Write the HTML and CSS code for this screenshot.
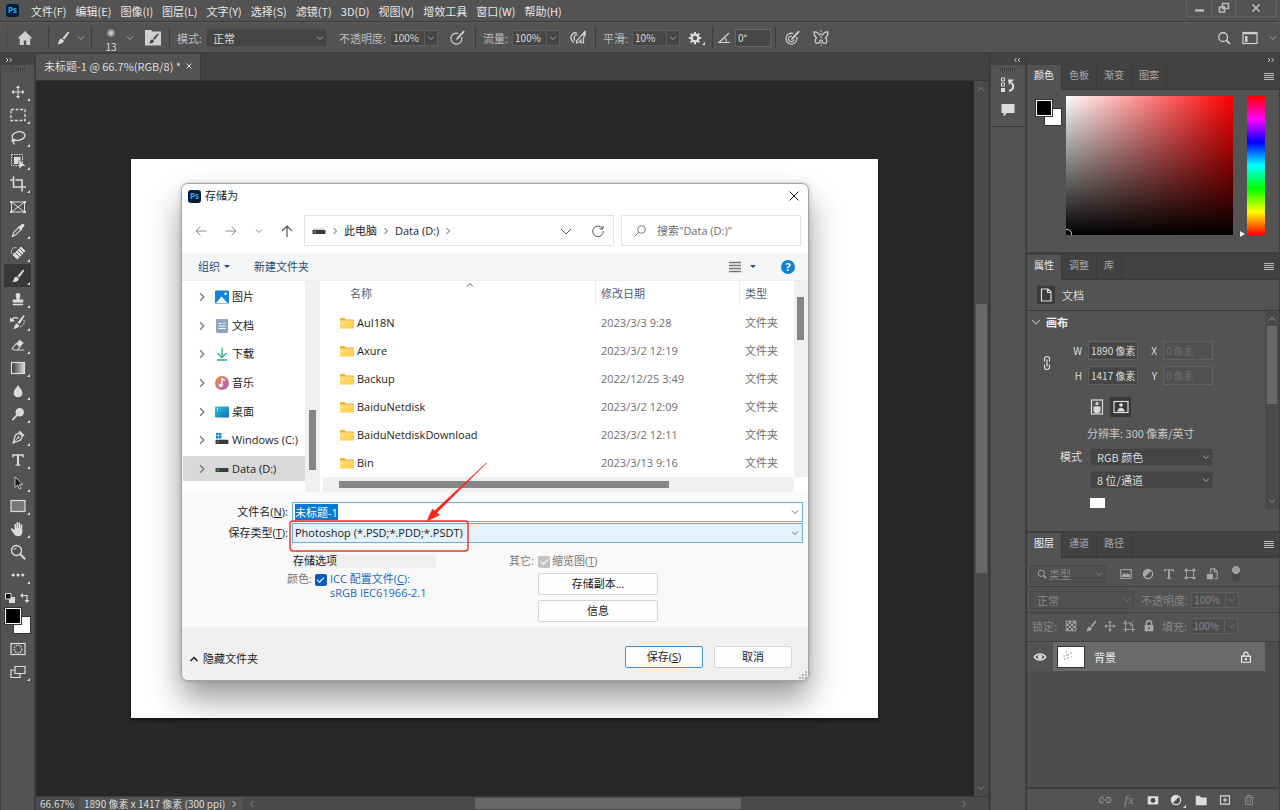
FILE: index.html
```html
<!DOCTYPE html>
<html lang="zh-CN">
  <head>
    <meta charset="UTF-8" />
    <meta name="viewport" content="width=device-width, initial-scale=1.0" />
    <title>未标题-1 @ 66.7%(RGB/8)</title>
    <link rel="stylesheet" href="styles.css">
  </head>
  <body>
    <svg class="sprite" aria-hidden="true">
      <symbol id="down" viewBox="0 0 8 8"><path d="M1 2.5l3 3 3-3" fill="none" stroke="currentColor" /></symbol>
      <symbol id="up" viewBox="0 0 8 8"><path d="M1 5.5l3-3 3 3" fill="none" stroke="currentColor" /></symbol>
      <symbol id="right" viewBox="0 0 8 8"><path d="M2.5 1l3 3-3 3" fill="none" stroke="currentColor" /></symbol>
      <symbol id="left" viewBox="0 0 8 8"><path d="M5.5 1l-3 3 3 3" fill="none" stroke="currentColor" /></symbol>
      <symbol id="expand" viewBox="0 0 8 8"><path d="M1 2l2 2-2 2M4.5 2l2 2-2 2" fill="none" stroke="currentColor" /></symbol>
      <symbol id="collapse" viewBox="0 0 8 8"><path d="M3.5 2l-2 2 2 2M7 2L5 4l2 2" fill="none" stroke="currentColor" /></symbol>
      <symbol id="corner" viewBox="0 0 3 3"><path d="M3 0v3h-3z" fill="currentColor" /></symbol>
      <symbol id="lines" viewBox="0 0 10 8"><path d="M0 .5h10M0 2.5h10M0 4.5h10M0 6.5h10" stroke="currentColor" /></symbol>
      <symbol id="close" viewBox="0 0 12 12"><path d="M1.5 1.5l9 9M10.5 1.5l-9 9" stroke="currentColor" /></symbol>
      <symbol id="home" viewBox="0 0 16 16"><path d="M8 1L.5 8.5h2.3V15h4v-4.5h2.4V15h4V8.5h2.3z" fill="currentColor" /></symbol>
      <symbol id="brush" viewBox="0 0 16 16"><path d="M14.5.8c.8.5.6 1.2.2 1.8L9.5 9.8 7.3 8.2l5.7-6.7c.4-.5 1-.9 1.5-.7zM6.6 9l2.2 1.7c.4 2.6-2 4.4-7.6 4.4 2.1-1.1 1.5-2.3 2.3-4.2.6-1.4 1.8-2 3.1-1.9z" fill="currentColor" /></symbol>
      <symbol id="preset" viewBox="0 0 16 16"><path d="M0 0h6l1.500 1.500H16v14H0z" fill="currentColor" /><path d="M13.200 3.500c.8.5.2 1.300 0 1.600L9.500 10 8 8.800l4-4.700c.4-.5.8-.8 1.200-.6zM7.400 9.500l1.500 1.200c.2 1.800-1.600 2.800-5 2.800 1.300-.7.8-1.500 1.400-2.800.4-.9 1.200-1.300 2.100-1.200z" fill="#444" /></symbol>
      <symbol id="pen-circle" viewBox="0 0 16 16"><path d="M9.500 3.500A5.500 5.500 0 1 0 12.700 7" fill="none" stroke="currentColor" stroke-width="1.200" /><path d="M14.500.5l1.300 1.300-6.600 7.200-2.500 1.200 1.100-2.500z" fill="currentColor" /></symbol>
      <symbol id="target" viewBox="0 0 16 16"><path d="M9.500 3.500A5.500 5.500 0 1 0 12.700 7M8 6.200A2.800 2.800 0 1 0 10 9.500" fill="none" stroke="currentColor" stroke-width="1.200" /><path d="M14.500.5l1.300 1.300-6.600 7.200-2.500 1.200 1.100-2.500z" fill="currentColor" /></symbol>
      <symbol id="airbrush" viewBox="0 0 16 16"><path d="M7 3C3.500 2 1 4.500 1 7.500c0 2.300 1 4 3 5M7.500 5C5.500 4.500 4 6 4 8c0 1 .3 1.800 1 2.500" fill="none" stroke="currentColor" stroke-width="1.300" /><path d="M15 1.500L6.500 11v2l2-.5L11 10v3h2.500V8L15 5z" fill="none" stroke="currentColor" stroke-width="1.200" /><path d="M15.500 1v4L12 6z" fill="currentColor" /></symbol>
      <symbol id="gear" viewBox="0 0 16 16"><circle cx="8" cy="8" r="3.800" fill="none" stroke="currentColor" stroke-width="2.600" /><path d="M8 1v2.5M8 12.500V15M1 8h2.5M12.500 8H15M3 3l1.800 1.800M11.200 11.200L13 13M13 3l-1.800 1.800M4.800 11.200L3 13" stroke="currentColor" stroke-width="2.200" /></symbol>
      <symbol id="angle" viewBox="0 0 16 16"><path d="M13 3L3 12.500h11M8.500 7.500c1.500 1.200 2.200 3 2 5" fill="none" stroke="currentColor" stroke-width="1.200" /></symbol>
      <symbol id="butterfly" viewBox="0 0 16 16"><path d="M7 5.500C5.500 3 3 1.500 1 2c0 2.500.5 4.500 2.500 6C1.500 9.500 2 12 3.500 13.500 5.500 13.500 7 12 7 10M9 5.500C10.500 3 13 1.500 15 2c0 2.500-.5 4.500-2.500 6 2 1.500 1.500 4 0 5.500C10.500 13.500 9 12 9 10" fill="none" stroke="currentColor" stroke-width="1.200" /><path d="M8 0v16" stroke="currentColor" stroke-dasharray="2 1" /></symbol>
      <symbol id="search" viewBox="0 0 16 16"><circle cx="7" cy="7" r="5" fill="none" stroke="currentColor" stroke-width="1.500" /><path d="M10.800 10.800l4 4" stroke="currentColor" stroke-width="2" /></symbol>
      <symbol id="layout" viewBox="0 0 16 16"><rect x="1" y="2.500" width="14" height="11" fill="none" stroke="currentColor" stroke-width="1.200" /><path d="M1 3.500h14" stroke="currentColor" stroke-width="1.600" /><path d="M3 6h2.500v6H3z" fill="currentColor" /></symbol>
      <symbol id="move" viewBox="0 0 16 16"><path d="M8 2v12M2 8h12" stroke="currentColor" stroke-width="1.200" /><path d="M8 .5l2.500 3h-5zM8 15.500l2.500-3h-5zM.5 8l3-2.500v5zM15.500 8l-3-2.500v5z" fill="currentColor" /></symbol>
      <symbol id="marquee" viewBox="0 0 16 16"><rect x="1" y="2.500" width="14" height="11" fill="none" stroke="currentColor" stroke-width="1.300" stroke-dasharray="3 1.600" /></symbol>
      <symbol id="lasso" viewBox="0 0 16 16"><ellipse cx="8.500" cy="6" rx="6.500" ry="4.300" transform="rotate(-12 8.500 6)" fill="none" stroke="currentColor" stroke-width="1.300" /><path d="M3 9c-2 1.500-.5 3.500 1 2.600C5.500 10.600 3.500 9 2.700 10.500c-.5 1.500.8 2.500 2 4" fill="none" stroke="currentColor" stroke-width="1.200" /></symbol>
      <symbol id="object-select" viewBox="0 0 16 16"><rect x="1.500" y="1.500" width="11" height="11" fill="none" stroke="currentColor" stroke-dasharray="1.500 1" /><path d="M4 4h6.500v4L8.500 7v4H4z" fill="currentColor" /><path d="M9 7l6.500 6h-3.300L9.500 15.800z" fill="currentColor" /></symbol>
      <symbol id="crop" viewBox="0 0 16 16"><path d="M3.500.5v10.500H12M0 4h3M5.500 4H12v11.500M13 11h3" fill="none" stroke="currentColor" stroke-width="1.600" /></symbol>
      <symbol id="frame" viewBox="0 0 16 16"><path d="M1.500 3h13v10h-13zM1.500 3l13 10M14.500 3l-13 10" fill="none" stroke="currentColor" /><path d="M0 2h2.500v2H0zM13.500 2H16v2h-2.500zM0 12h2.500v2H0zM13.500 12H16v2h-2.500z" fill="currentColor" /></symbol>
      <symbol id="eyedropper" viewBox="0 0 16 16"><path d="M9 5l2.500 2.500-6.500 6.300-3.500 1.500L3 11z" fill="none" stroke="currentColor" stroke-width="1.300" /><path d="M7.500 4.500l1.300-1.200 1 .9C11 2 12.500.5 14 .8c1.500.5 1.700 2.200.8 3.200-.7.900-1.800 1.800-2.600 2.400l.8.900-1.300 1.300z" fill="currentColor" /></symbol>
      <symbol id="heal" viewBox="0 0 16 16"><path d="M11 2l4 4-7.500 8-4.500-4z" fill="currentColor" stroke="currentColor" stroke-linejoin="round" /><path d="M7.500 5.500l4.500 4.500M5.500 7.500l4.500 4.500M9.500 3.500L14 8" stroke="#535353" stroke-width=".9" /><path d="M2 9C0 5 3 2 7 2.500" fill="none" stroke="currentColor" stroke-dasharray="1.500 1" /></symbol>
      <symbol id="stamp" viewBox="0 0 16 16"><path d="M8 1c2 0 3 1.400 2.700 3.200L9.500 8.500H14V12H2V8.500h4.500L5.300 4.200C5 2.400 6 1 8 1zM2 13.300h12V15H2z" fill="currentColor" /></symbol>
      <symbol id="history" viewBox="0 0 16 16"><path d="M14 1.200c.8.300.7 1 .3 1.600L9.500 10 7.500 8.500 13 1.700c.3-.4.700-.6 1-.5zM7 9.500l2 1.500c.3 2-1.600 3.800-6 3.800 2-1.500 1.500-5 4-5.300z" fill="currentColor" /><path d="M2 6C3 3.500 6 3 8 4.500" fill="none" stroke="currentColor" stroke-width="1.300" /><path d="M0 3.500V8l5-1z" fill="currentColor" /><path d="M14 6c1 3-1 6-4 7" fill="none" stroke="currentColor" stroke-dasharray="1.500 1" /></symbol>
      <symbol id="eraser" viewBox="0 0 16 16"><path d="M10 2l4.500 3.500-4 4.500L6 6.300z" fill="currentColor" /><path d="M10.500 10L7 13.800H3.300L1.200 12 6 6.300zM7 13.800h8" fill="none" stroke="currentColor" stroke-width="1.200" /></symbol>
      <linearGradient id="grad"><stop stop-color="#333" /><stop offset="1" stop-color="#ddd" /></linearGradient>
      <symbol id="gradient" viewBox="0 0 16 16"><rect x="1.500" y="2.500" width="13" height="11" fill="url(#grad)" stroke="currentColor" stroke-width="1.200" /></symbol>
      <symbol id="blur" viewBox="0 0 16 16"><path d="M8 1c2 3.500 5 6 5 9.200A5 5 0 0 1 3 10.200C3 7 6 4.500 8 1z" fill="currentColor" /></symbol>
      <symbol id="dodge" viewBox="0 0 16 16"><circle cx="10" cy="6" r="4.800" fill="currentColor" /><path d="M7 9l-5.500 6" stroke="currentColor" stroke-width="1.800" /></symbol>
      <symbol id="pen" viewBox="0 0 16 16"><path d="M9 3.500L13 7l-2 4.500-8.500 3.300L5 6z" fill="none" stroke="currentColor" stroke-width="1.400" /><path d="M10 .8L15.500 6 14 7.300 8.700 2z" fill="currentColor" /><path d="M2.500 14.500L8 9" stroke="currentColor" /><circle cx="8.500" cy="8.500" r="1.300" fill="currentColor" /></symbol>
      <symbol id="type" viewBox="0 0 16 16"><path d="M1.500 1.500h13V5h-1.200c-.2-1.500-.8-2-2-2H9.200v9.500c0 .8.500 1 1.800 1v1H5v-1c1.300 0 1.800-.2 1.800-1V3H4.700c-1.200 0-1.800.5-2 2H1.500z" fill="currentColor" /></symbol>
      <symbol id="arrow" viewBox="0 0 16 16"><path d="M4.500 1v12l3-2.800 2 4.800 2-1-2-4.500h4z" fill="#111" stroke="currentColor" /></symbol>
      <symbol id="rect" viewBox="0 0 16 16"><rect x="1" y="2.500" width="14" height="11" fill="#777" stroke="currentColor" stroke-width="1.200" /></symbol>
      <symbol id="hand" viewBox="0 0 16 16"><path d="M4.500 9V3.500c0-1 1.600-1 1.600 0V7h.4V1.800c0-1.100 1.700-1.100 1.700 0V7h.4V2.300c0-1.100 1.700-1.100 1.700 0V7.500h.4V4c0-1 1.600-1 1.600 0v7c0 2.700-1.800 4.300-4 4.300-2.500 0-3.700-1-4.800-3L1 8.500c-.5-1 .8-1.600 1.500-.8z" fill="currentColor" /></symbol>
      <symbol id="zoom" viewBox="0 0 16 16"><circle cx="6.500" cy="6.500" r="5" fill="none" stroke="currentColor" stroke-width="1.300" /><path d="M10.200 10.200l5 5" stroke="currentColor" stroke-width="2" /><path d="M4 6a3 3 0 0 1 2.500-2" fill="none" stroke="currentColor" /></symbol>
      <symbol id="more" viewBox="0 0 16 16"><g fill="currentColor"><circle cx="2.500" cy="8" r="1.800" /><circle cx="8" cy="8" r="1.800" /><circle cx="13.500" cy="8" r="1.800" /></g></symbol>
      <symbol id="mask" viewBox="0 0 16 16"><rect x="1" y="2.500" width="14" height="11" fill="none" stroke="currentColor" stroke-width="1.200" /><circle cx="8" cy="8" r="3.800" fill="none" stroke="currentColor" stroke-width="1.200" stroke-dasharray="1.500 1" /></symbol>
      <symbol id="screen" viewBox="0 0 16 16"><path d="M5 2.500h10v7H5zM5 6H1v7.500h9V10" fill="none" stroke="currentColor" stroke-width="1.200" /></symbol>
      <symbol id="default-colors" viewBox="0 0 10 10"><path d="M4 4h6v6H4z" fill="#ddd" /><path d="M.5.5H6V6H.5z" fill="#111" stroke="#ddd" /></symbol>
      <symbol id="swap" viewBox="0 0 10 10"><path d="M2 2.500h5v5.500" fill="none" stroke="currentColor" stroke-width="1.200" /><path d="M0 2.500L3 0v5zM7 10L4.500 7h5z" fill="currentColor" /></symbol>
      <symbol id="hist-panel" viewBox="0 0 16 16"><path d="M1.500 1h3v3h-3zM1.500 6h3v3h-3z" fill="none" stroke="currentColor" /><path d="M1 11h4v4H1z" fill="currentColor" /><path d="M9 14c4.500-1 5.500-5 2.500-8" fill="none" stroke="currentColor" stroke-width="2" /><path d="M8 2.500h6L9 8z" fill="currentColor" /></symbol>
      <symbol id="comment" viewBox="0 0 16 16"><path d="M1.500 2h13v9H7l-3.500 3.500V11h-2z" fill="currentColor" /></symbol>
      <symbol id="page" viewBox="0 0 16 16"><path d="M3.500 2h6.500l3 3v9h-9.500zM9.500 2v3.500H13" fill="none" stroke="currentColor" stroke-width="1.200" /></symbol>
      <symbol id="chain" viewBox="0 0 16 16"><path d="M5.500 6.500V4a2.500 2.500 0 0 1 5 0v2.500M5.500 9.500V12a2.500 2.500 0 0 0 5 0V9.500M8 4.500v7" fill="none" stroke="currentColor" stroke-width="1.200" /></symbol>
      <symbol id="chain-h" viewBox="0 0 16 16"><path d="M6.500 5H4.500a3 3 0 0 0 0 6h2M9.500 5h2a3 3 0 0 1 0 6h-2M4.500 8h7" fill="none" stroke="currentColor" stroke-width="1.300" /></symbol>
      <symbol id="portrait" viewBox="0 0 16 16"><rect x="2.500" y="1" width="11" height="14" fill="none" stroke="currentColor" stroke-width="1.200" /><circle cx="8" cy="4.500" r="1.600" fill="currentColor" /><path d="M4.500 8c0-1 7-1 7 0v4.500h-1V14h-5v-1.500h-1z" fill="currentColor" /></symbol>
      <symbol id="landscape" viewBox="0 0 16 16"><rect x="1" y="2.500" width="14" height="11" fill="none" stroke="currentColor" stroke-width="1.200" /><circle cx="8" cy="6" r="1.800" fill="currentColor" /><path d="M4.500 12.500c0-5 7-5 7 0z" fill="currentColor" /></symbol>
      <symbol id="image" viewBox="0 0 16 16"><rect x="2" y="3" width="12" height="10" fill="none" stroke="currentColor" stroke-width="1.200" /><path d="M3.500 11.500V9L6 6.500l2 2 2-1.500 2.500 2v2.500z" fill="currentColor" /></symbol>
      <symbol id="adjust" viewBox="0 0 16 16"><circle cx="8" cy="8" r="5.300" fill="none" stroke="currentColor" stroke-width="1.400" /><path d="M11.500 4.200a5.200 5.200 0 0 0-7.400 7.400z" fill="currentColor" /></symbol>
      <symbol id="shape" viewBox="0 0 16 16"><rect x="4" y="4" width="8" height="8" fill="none" stroke="currentColor" /><path d="M2 2h3v3H2zM11 2h3v3h-3zM2 11h3v3H2zM11 11h3v3h-3z" fill="currentColor" /></symbol>
      <symbol id="smart" viewBox="0 0 16 16"><path d="M6.500 7V2H11l3 3v8.500h-3.500M10.500 2v3.500H14" fill="none" stroke="currentColor" stroke-width="1.200" /><path d="M2 8h7v6H2z" fill="currentColor" /></symbol>
      <symbol id="checker" viewBox="0 0 16 16"><rect x="2.500" y="2.500" width="11" height="11" fill="none" stroke="currentColor" /><path d="M5.500 2.500h2.500V5H5.500zM10.500 2.500H13V5h-2.500zM3 5h2.500v3H3zM8 5h2.500v3H8zM5.500 8H8v2.500H5.500zM10.500 8H13v2.500h-2.500zM3 10.500h2.500V13H3zM8 10.500h2.500V13H8z" fill="currentColor" /></symbol>
      <symbol id="artboard" viewBox="0 0 16 16"><path d="M3.500 0v16M0 4h10.500L13 6.500V16M0 12.500h16M10 4v3h3M13 1v2" fill="none" stroke="currentColor" stroke-width="1.200" /></symbol>
      <symbol id="lock" viewBox="0 0 16 16"><path d="M5 7V5a3 3 0 0 1 6 0v2" fill="none" stroke="currentColor" stroke-width="1.600" /><path d="M3 7h10v7H3z" fill="currentColor" /><circle cx="8" cy="10.500" r="1" fill="#444" /></symbol>
      <symbol id="lock-line" viewBox="0 0 16 16"><path d="M5.500 7V5a2.500 2.500 0 0 1 5 0v2M3 7h10v7H3z" fill="none" stroke="currentColor" stroke-width="1.300" /><circle cx="8" cy="10.500" r="1.300" fill="currentColor" /></symbol>
      <symbol id="eye" viewBox="0 0 16 16"><path d="M1.500 8C4.500 3.500 11.500 3.500 14.500 8 11.500 12.500 4.500 12.500 1.500 8z" fill="none" stroke="currentColor" stroke-width="1.700" /><circle cx="8" cy="8" r="2.500" fill="currentColor" /></symbol>
      <symbol id="add-mask" viewBox="0 0 16 16"><path d="M1 3h14v11H1z" fill="currentColor" /><circle cx="8" cy="8.500" r="3.200" fill="#444" /></symbol>
      <symbol id="group" viewBox="0 0 16 16"><path d="M2 3h4.500l1.500 2h6.500v9H2z" fill="currentColor" /></symbol>
      <symbol id="new-layer" viewBox="0 0 16 16"><path d="M2 2.500h12v11H2zM8 5v6M5 8h6" fill="none" stroke="currentColor" stroke-width="1.400" /></symbol>
      <symbol id="trash" viewBox="0 0 16 16"><path d="M2 4.500h12M6 4V2h4v2M3.500 4.500V14h9V4.500M6.500 6.500v6M9.500 6.500v6" fill="none" stroke="currentColor" stroke-width="1.300" /></symbol>
      <symbol id="back" viewBox="0 0 12 12"><path d="M11.500 6H1M5.500 1.500L1 6l4.500 4.500" fill="none" stroke="currentColor" /></symbol>
      <symbol id="forward" viewBox="0 0 12 12"><path d="M.5 6H11M6.500 1.500L11 6l-4.500 4.500" fill="none" stroke="currentColor" /></symbol>
      <symbol id="parent" viewBox="0 0 12 12"><path d="M6 12V1M1 6l5-5 5 5" fill="none" stroke="currentColor" stroke-width="1.200" /></symbol>
      <symbol id="refresh" viewBox="0 0 12 12"><path d="M10.500 3.500A5.300 5.300 0 1 0 11.300 6M11 .5V4H7.500" fill="none" stroke="currentColor" /></symbol>
      <symbol id="find" viewBox="0 0 12 12"><circle cx="7.500" cy="4.500" r="3.800" fill="none" stroke="currentColor" /><path d="M4.800 7.200L.5 11.500" stroke="currentColor" /></symbol>
      <symbol id="drive" viewBox="0 0 14 14"><path d="M2 4h10l1.500 3H.5z" fill="#d8dadd" /><rect x=".5" y="6" width="13" height="4" rx=".8" fill="#3a3a3a" /><path d="M2 8h2" stroke="#2bd52b" stroke-width="1.300" /></symbol>
      <symbol id="drive-c" viewBox="0 0 14 14"><path d="M1 6h11l1.500 2H.5z" fill="#c8cacd" /><rect x=".5" y="7" width="13" height="4" rx=".8" fill="#3a3a3a" /><path d="M1 0h2.500v2.500H1zM4 0h2.500v2.500H4zM1 3h2.500v2.500H1zM4 3h2.500v2.500H4z" fill="#0a84dc" /><path d="M2 9h2" stroke="#2bd52b" /></symbol>
      <symbol id="pictures" viewBox="0 0 14 14"><rect width="14" height="13" y=".5" rx="1" fill="#1583d8" /><path d="M1 13l5.500-6.500L12.500 13z" fill="#fff" /><circle cx="10.500" cy="3.800" r="1.200" fill="#fff" /></symbol>
      <symbol id="documents" viewBox="0 0 14 14"><rect x="1" width="12" height="14" rx="1" fill="#8ea4c2" /><path d="M3.500 4.500h3M3.500 7h7M3.500 9.500h7M8 4h2.500" stroke="#fff" stroke-width="1.200" /></symbol>
      <symbol id="downloads" viewBox="0 0 14 14"><path d="M7 .5v9.500M2.500 6L7 10.500 11.500 6M2 13h10" fill="none" stroke="#1fb08c" stroke-width="1.300" /></symbol>
      <linearGradient id="sunset" x2="1" y2="1"><stop stop-color="#f0893f" /><stop offset="1" stop-color="#a95fc4" /></linearGradient>
      <symbol id="music" viewBox="0 0 14 14"><circle cx="7" cy="7" r="7" fill="url(#sunset)" /><circle cx="5.700" cy="9.300" r="1.900" fill="#fff" /><path d="M7 9.500V2.800l3 1.500" fill="none" stroke="#fff" stroke-width="1.300" /></symbol>
      <linearGradient id="sea" x2="1" y2="1"><stop stop-color="#35c3dc" /><stop offset="1" stop-color="#0a6ebd" /></linearGradient>
      <symbol id="desktop" viewBox="0 0 14 14"><rect y="1.500" width="14" height="11" rx="1" fill="url(#sea)" /><path d="M2 3.500h1M2 5.500h1" stroke="#fff" /></symbol>
      <linearGradient id="yellow" x2="1" y2="1"><stop stop-color="#ffe28a" /><stop offset="1" stop-color="#fdc83c" /></linearGradient>
      <symbol id="folder" viewBox="0 0 14 12"><path d="M0 2a1 1 0 0 1 1-1h3.500l1.500 1.500h7a1 1 0 0 1 1 1V6H0z" fill="#efb02f" /><path d="M0 3.500h13a1 1 0 0 1 1 1v7H0z" fill="url(#yellow)" /></symbol>
    </svg>

    <div class="app">
      <header class="menubar">
        <span class="logo">Ps</span>
        <nav class="menus">
          <a href="#">文件(F)</a>
          <a href="#">编辑(E)</a>
          <a href="#">图像(I)</a>
          <a href="#">图层(L)</a>
          <a href="#">文字(Y)</a>
          <a href="#">选择(S)</a>
          <a href="#">滤镜(T)</a>
          <a href="#">3D(D)</a>
          <a href="#">视图(V)</a>
          <a href="#">增效工具</a>
          <a href="#">窗口(W)</a>
          <a href="#">帮助(H)</a>
        </nav>
        <div class="window-buttons">
          <button aria-label="最小化"><svg class="i12" viewBox="0 0 12 12"><path d="M2 8.500h9" stroke="currentColor" stroke-width="2.500" /></svg></button>
          <button aria-label="还原"><svg class="i12" viewBox="0 0 12 12"><path d="M4.500 1.500h6v5h-6zM1.500 5h5v5h-5z" fill="none" stroke="currentColor" stroke-width="1.600" /></svg></button>
          <button aria-label="关闭" class="wide"><svg class="i12" viewBox="0 0 12 12"><path d="M2.500 2.500l7 7M9.500 2.500l-7 7" stroke="currentColor" stroke-width="1.600" /></svg></button>
        </div>
      </header>

      <div class="options">
        <div class="opt opt-home"><button aria-label="主页"><svg class="i16"><use href="#home" /></svg></button></div>
        <div class="opt opt-brush"><button aria-label="画笔"><svg class="i14"><use href="#brush" /></svg></button><svg class="i8"><use href="#down" /></svg></div>
        <div class="opt opt-size">
          <button class="brush-size"><i class="dot"></i>13</button>
          <svg class="i8"><use href="#down" /></svg>
          <button aria-label="画笔设置"><svg class="i16"><use href="#preset" /></svg></button>
        </div>
        <div class="opt opt-mode">
          <label for="mode">模式:</label>
          <span class="pick blend"><select id="mode"><option>正常</option></select><svg class="i8"><use href="#down" /></svg></span>
          <label for="opacity">不透明度:</label>
          <span class="percent"><input id="opacity" type="text" value="100%" /><svg class="i8"><use href="#down" /></svg></span>
          <button aria-label="不透明度压力"><svg class="i16"><use href="#pen-circle" /></svg></button>
        </div>
        <div class="opt opt-flow">
          <label for="flow">流量:</label>
          <span class="percent"><input id="flow" type="text" value="100%" /><svg class="i8"><use href="#down" /></svg></span>
          <button aria-label="喷枪"><svg class="i16"><use href="#airbrush" /></svg></button>
        </div>
        <div class="opt opt-smooth">
          <label for="smooth">平滑:</label>
          <span class="percent"><input id="smooth" type="text" value="10%" /><svg class="i8"><use href="#down" /></svg></span>
          <button aria-label="平滑选项" class="has-more"><svg class="i14"><use href="#gear" /></svg><svg class="corner"><use href="#corner" /></svg></button>
        </div>
        <div class="opt opt-angle">
          <label for="angle-value" aria-label="角度"><svg class="i16"><use href="#angle" /></svg></label>
          <input id="angle-value" type="text" value="0°" />
        </div>
        <div class="opt opt-last">
          <button aria-label="大小压力"><svg class="i16"><use href="#target" /></svg></button>
          <button aria-label="对称"><svg class="i16"><use href="#butterfly" /></svg></button>
        </div>
        <div class="opt-right">
          <button aria-label="搜索"><svg class="i14"><use href="#search" /></svg></button>
          <button aria-label="工作区"><svg class="i16"><use href="#layout" /></svg></button>
          <svg class="i8"><use href="#down" /></svg>
        </div>
      </div>

      <div class="workspace">
        <aside class="toolbar">
          <div class="strip"><svg class="i8"><use href="#expand" /></svg></div>
          <div class="grip"></div>
          <div class="tools">
            <button aria-label="移动"><svg class="i14"><use href="#move" /></svg><svg class="corner"><use href="#corner" /></svg></button>
            <button aria-label="矩形选框"><svg class="i16"><use href="#marquee" /></svg><svg class="corner"><use href="#corner" /></svg></button>
            <button aria-label="套索"><svg class="i16"><use href="#lasso" /></svg><svg class="corner"><use href="#corner" /></svg></button>
            <button aria-label="对象选择"><svg class="i16"><use href="#object-select" /></svg><svg class="corner"><use href="#corner" /></svg></button>
            <button aria-label="裁剪"><svg class="i16"><use href="#crop" /></svg><svg class="corner"><use href="#corner" /></svg></button>
            <button aria-label="图框"><svg class="i16"><use href="#frame" /></svg></button>
            <button aria-label="吸管"><svg class="i14"><use href="#eyedropper" /></svg><svg class="corner"><use href="#corner" /></svg></button>
            <button aria-label="修复画笔"><svg class="i16"><use href="#heal" /></svg><svg class="corner"><use href="#corner" /></svg></button>
            <button aria-label="画笔" class="active"><svg class="i14"><use href="#brush" /></svg><svg class="corner"><use href="#corner" /></svg></button>
            <button aria-label="仿制图章"><svg class="i14"><use href="#stamp" /></svg><svg class="corner"><use href="#corner" /></svg></button>
            <button aria-label="历史记录画笔"><svg class="i16"><use href="#history" /></svg><svg class="corner"><use href="#corner" /></svg></button>
            <button aria-label="橡皮擦"><svg class="i14"><use href="#eraser" /></svg><svg class="corner"><use href="#corner" /></svg></button>
            <button aria-label="渐变"><svg class="i16"><use href="#gradient" /></svg><svg class="corner"><use href="#corner" /></svg></button>
            <button aria-label="模糊"><svg class="i14"><use href="#blur" /></svg><svg class="corner"><use href="#corner" /></svg></button>
            <button aria-label="减淡"><svg class="i14"><use href="#dodge" /></svg><svg class="corner"><use href="#corner" /></svg></button>
            <button aria-label="钢笔"><svg class="i14"><use href="#pen" /></svg><svg class="corner"><use href="#corner" /></svg></button>
            <button aria-label="文字"><svg class="i14"><use href="#type" /></svg><svg class="corner"><use href="#corner" /></svg></button>
            <button aria-label="路径选择"><svg class="i14"><use href="#arrow" /></svg><svg class="corner"><use href="#corner" /></svg></button>
            <button aria-label="矩形"><svg class="i16"><use href="#rect" /></svg><svg class="corner"><use href="#corner" /></svg></button>
            <button aria-label="抓手"><svg class="i16"><use href="#hand" /></svg><svg class="corner"><use href="#corner" /></svg></button>
            <button aria-label="缩放"><svg class="i16"><use href="#zoom" /></svg></button>
            <button aria-label="更多"><svg class="i14"><use href="#more" /></svg><svg class="corner"><use href="#corner" /></svg></button>
          </div>
          <div class="color-switch">
            <svg class="i10"><use href="#default-colors" /></svg>
            <svg class="i10"><use href="#swap" /></svg>
          </div>
          <div class="swatches"><i class="fg"></i><i class="bg"></i></div>
          <div class="tools">
            <button aria-label="快速蒙版"><svg class="i16"><use href="#mask" /></svg></button>
            <button aria-label="屏幕模式"><svg class="i16"><use href="#screen" /></svg><svg class="corner"><use href="#corner" /></svg></button>
          </div>
        </aside>

        <main class="document">
          <div class="doc-tabs">
            <div class="doc-tab">未标题-1 @ 66.7%(RGB/8) * <button aria-label="关闭"><svg class="i8" viewBox="0 0 8 8"><path d="M1.500 1.500l5 5M6.500 1.500l-5 5" stroke="currentColor" /></svg></button></div>
          </div>
          <div class="canvas-row">
            <div class="canvas">
              <div class="artboard">
                <form class="dialog" role="dialog" aria-label="存储为">
                  <div class="dialog-title">
                    <span class="logo">Ps</span>
                    <span>存储为</span>
                    <button type="button" aria-label="关闭"><svg class="i12"><use href="#close" /></svg></button>
                  </div>
                  <div class="dialog-nav">
                    <div class="nav-arrows">
                      <button type="button" aria-label="后退"><svg class="i12"><use href="#back" /></svg></button>
                      <button type="button" aria-label="前进"><svg class="i12"><use href="#forward" /></svg></button>
                      <button type="button" aria-label="最近"><svg class="i8"><use href="#down" /></svg></button>
                      <button type="button" aria-label="上移" class="dark"><svg class="i12"><use href="#parent" /></svg></button>
                    </div>
                    <div class="address">
                      <svg class="i14"><use href="#drive" /></svg>
                      <svg class="i8"><use href="#right" /></svg>
                      <a href="#">此电脑</a>
                      <svg class="i8"><use href="#right" /></svg>
                      <a href="#">Data (D:)</a>
                      <svg class="i8"><use href="#right" /></svg>
                      <span class="address-end">
                        <svg class="i12" viewBox="0 0 12 12"><path d="M1 4l5 5 5-5" fill="none" stroke="currentColor" /></svg>
                        <svg class="i12"><use href="#refresh" /></svg>
                      </span>
                    </div>
                    <label class="search">
                      <svg class="i12"><use href="#find" /></svg>
                      <input type="text" aria-label="搜索" placeholder='搜索"Data (D:)"' />
                    </label>
                  </div>
                  <div class="dialog-tools">
                    <button type="button">组织 <i class="caret"></i></button>
                    <button type="button">新建文件夹</button>
                    <span class="view">
                      <svg class="view-lines" viewBox="0 0 12 12"><path d="M0 1.500h12M0 4.500h12M0 7.500h12M0 10.500h12" stroke="#777" stroke-width="1.500" /></svg>
                      <i class="caret"></i>
                      <button type="button" class="help" aria-label="帮助">?</button>
                    </span>
                  </div>
                  <div class="browser">
                    <ul class="tree">
                      <li><a href="#"><svg class="i10"><use href="#right" /></svg><svg class="i14"><use href="#pictures" /></svg>图片</a></li>
                      <li><a href="#"><svg class="i10"><use href="#right" /></svg><svg class="i14"><use href="#documents" /></svg>文档</a></li>
                      <li><a href="#"><svg class="i10"><use href="#right" /></svg><svg class="i14"><use href="#downloads" /></svg>下载</a></li>
                      <li><a href="#"><svg class="i10"><use href="#right" /></svg><svg class="i14"><use href="#music" /></svg>音乐</a></li>
                      <li><a href="#"><svg class="i10"><use href="#right" /></svg><svg class="i14"><use href="#desktop" /></svg>桌面</a></li>
                      <li><a href="#"><svg class="i10"><use href="#right" /></svg><svg class="i14"><use href="#drive-c" /></svg>Windows (C:)</a></li>
                      <li><a href="#" class="selected"><svg class="i10"><use href="#right" /></svg><svg class="i14"><use href="#drive" /></svg>Data (D:)</a></li>
                    </ul>
                    <div class="tree-scroll"><i></i></div>
                    <div class="files">
                      <table>
                        <thead>
                          <tr><th class="col-name">名称<svg class="sort i8"><use href="#up" /></svg></th><th class="col-date">修改日期</th><th>类型</th></tr>
                        </thead>
                        <tbody>
                          <tr><td><svg><use href="#folder" /></svg>AuI18N</td><td>2023/3/3 9:28</td><td>文件夹</td></tr>
                          <tr><td><svg><use href="#folder" /></svg>Axure</td><td>2023/3/2 12:19</td><td>文件夹</td></tr>
                          <tr><td><svg><use href="#folder" /></svg>Backup</td><td>2022/12/25 3:49</td><td>文件夹</td></tr>
                          <tr><td><svg><use href="#folder" /></svg>BaiduNetdisk</td><td>2023/3/2 12:09</td><td>文件夹</td></tr>
                          <tr><td><svg><use href="#folder" /></svg>BaiduNetdiskDownload</td><td>2023/3/2 12:11</td><td>文件夹</td></tr>
                          <tr><td><svg><use href="#folder" /></svg>Bin</td><td>2023/3/13 9:16</td><td>文件夹</td></tr>
                        </tbody>
                      </table>
                      <div class="files-hscroll"><i></i></div>
                    </div>
                    <div class="files-vscroll"><i></i></div>
                  </div>
                  <div class="save-form">
                    <div class="fields">
                      <label for="filename">文件名(<u>N</u>):</label>
                      <span class="combo"><input id="filename" type="text" value="未标题-1" /><svg class="i8"><use href="#down" /></svg></span>
                      <label for="filetype">保存类型(<u>T</u>):</label>
                      <span class="combo tinted"><select id="filetype"><option>Photoshop (*.PSD;*.PDD;*.PSDT)</option></select><svg class="i8"><use href="#down" /></svg></span>
                    </div>
                    <div class="save-options">
                      <div class="option-left">
                        <div class="option-title">存储选项</div>
                        <div class="option-line">
                          <span class="muted">颜色:</span>
                          <input type="checkbox" id="icc" checked />
                          <label for="icc">ICC 配置文件(<u>C</u>):<br />sRGB IEC61966-2.1</label>
                        </div>
                      </div>
                      <div class="option-right">
                        <span class="muted">其它:</span>
                        <div class="thumb-line">
                          <input type="checkbox" id="thumb" checked disabled />
                          <label for="thumb">缩览图(<u>T</u>)</label>
                        </div>
                        <button type="button">存储副本...</button>
                        <button type="button">信息</button>
                      </div>
                    </div>
                  </div>
                  <div class="dialog-footer">
                    <button type="button" class="hide-folders"><svg class="i8" viewBox="0 0 8 8"><path d="M.5 6L4 2.500 7.500 6" fill="none" stroke="currentColor" stroke-width="1.500" /></svg>隐藏文件夹</button>
                    <button type="button" class="primary">保存(<u>S</u>)</button>
                    <button type="button">取消</button>
                    <svg class="resize" viewBox="0 0 8 8"><path d="M6 0h2v2H6zM3 3h2v2H3zM6 3h2v2H6zM0 6h2v2H0zM3 6h2v2H3zM6 6h2v2H6z" fill="#b5b5b5" /></svg>
                  </div>
                  <!-- red marker around the file type -->
                  <svg class="marker" viewBox="0 0 200 90">
                    <rect x="2" y="59" width="178" height="30" rx="3" fill="none" stroke="#f5372e" stroke-width="1.500" />
                    <path d="M198.500 1L149 50.500l2.500 2.500L139 59l5.500-12 2 2z" fill="#f5261a" stroke="#f5261a" stroke-width=".6" />
                  </svg>
                </form>
              </div>
            </div>
            <div class="doc-vscroll"><svg class="i8"><use href="#up" /></svg><i></i><svg class="i8"><use href="#down" /></svg></div>
          </div>
          <div class="status">
            <span class="zoom-level">66.67%</span>
            <span class="doc-info">1890 像素 x 1417 像素 (300 ppi) <svg class="i8"><use href="#right" /></svg></span>
            <div class="doc-hscroll"><svg class="i8"><use href="#left" /></svg><i></i><svg class="i8"><use href="#right" /></svg></div>
          </div>
        </main>

        <aside class="dock">
          <div class="strip"><svg class="i8"><use href="#collapse" /></svg></div>
          <div class="dock-icons">
            <div class="grip"></div>
            <button aria-label="历史记录"><svg class="i16"><use href="#hist-panel" /></svg></button>
            <button aria-label="注释"><svg class="i16"><use href="#comment" /></svg></button>
          </div>
        </aside>

        <aside class="panels">
          <div class="strip"><svg class="i8"><use href="#expand" /></svg></div>
          <section class="color-panel">
            <div class="tabs">
              <button class="on">颜色</button><button>色板</button><button>渐变</button><button>图案</button>
              <svg class="panel-menu"><use href="#lines" /></svg>
            </div>
            <div class="color-body">
              <div class="swatches"><i class="fg"></i><i class="bg"></i></div>
              <div class="color-field"><i></i></div>
              <div class="hue"></div>
            </div>
          </section>

          <section class="properties">
            <div class="tabs">
              <button class="on">属性</button><button>调整</button><button>库</button>
              <svg class="panel-menu"><use href="#lines" /></svg>
            </div>
            <div class="doc-row"><span class="doc-icon"><svg class="i16"><use href="#page" /></svg></span>文档</div>
            <div class="prop-body">
              <div class="prop-main">
                <div class="prop-title"><svg class="i10"><use href="#down" /></svg>画布</div>
                <div class="size-grid">
                  <svg class="i16 link"><use href="#chain" /></svg>
                  <label for="w">W</label><input id="w" type="text" value="1890 像素" />
                  <label for="x">X</label><input id="x" type="text" value="0 像素" disabled />
                  <label for="h">H</label><input id="h" type="text" value="1417 像素" />
                  <label for="y">Y</label><input id="y" type="text" value="0 像素" disabled />
                </div>
                <div class="orient">
                  <button aria-label="纵向"><svg class="i16"><use href="#portrait" /></svg></button>
                  <button aria-label="横向" class="on"><svg class="i16"><use href="#landscape" /></svg></button>
                </div>
                <div class="resolution">分辨率: 300 像素/英寸</div>
                <div class="mode-grid">
                  <label for="color-mode">模式</label>
                  <span class="pick"><select id="color-mode"><option>RGB 颜色</option></select><svg class="i8"><use href="#down" /></svg></span>
                  <span class="pick"><select aria-label="位深"><option>8 位/通道</option></select><svg class="i8"><use href="#down" /></svg></span>
                  <i class="fill-swatch"></i>
                </div>
              </div>
              <div class="prop-scroll"><svg class="i8"><use href="#up" /></svg><i></i><svg class="i8"><use href="#down" /></svg></div>
            </div>
          </section>

          <section class="layers">
            <div class="tabs">
              <button class="on">图层</button><button>通道</button><button>路径</button>
              <svg class="panel-menu"><use href="#lines" /></svg>
            </div>
            <div class="layer-row filter">
              <span class="pick with-icon"><svg class="i10 lens"><use href="#search" /></svg><select aria-label="类型"><option>类型</option></select><svg class="i8"><use href="#down" /></svg></span>
              <div class="filter-icons">
                <svg class="i14"><use href="#image" /></svg>
                <svg class="i14"><use href="#adjust" /></svg>
                <svg class="i12"><use href="#type" /></svg>
                <svg class="i14"><use href="#shape" /></svg>
                <svg class="i14"><use href="#smart" /></svg>
                <i class="toggle"></i>
              </div>
            </div>
            <div class="layer-row">
              <span class="pick layer-mode"><select aria-label="混合模式"><option>正常</option></select><svg class="i8"><use href="#down" /></svg></span>
              <label for="layer-opacity">不透明度:</label>
              <span class="percent"><input id="layer-opacity" type="text" value="100%" disabled /><svg class="i8"><use href="#down" /></svg></span>
            </div>
            <div class="layer-row locks">
              <span>锁定:</span>
              <div class="lock-icons">
                <svg class="i14"><use href="#checker" /></svg>
                <svg class="i12"><use href="#brush" /></svg>
                <svg class="i12"><use href="#move" /></svg>
                <svg class="i12"><use href="#artboard" /></svg>
                <svg class="i14"><use href="#lock" /></svg>
              </div>
              <label for="fill">填充:</label>
              <span class="percent"><input id="fill" type="text" value="100%" disabled /><svg class="i8"><use href="#down" /></svg></span>
            </div>
            <div class="layer-list">
              <div class="layer">
                <button class="visibility" aria-label="可见性"><svg class="i14"><use href="#eye" /></svg></button>
                <div class="layer-name">
                  <svg class="layer-thumb" viewBox="0 0 26 20"><path d="M5 9h2M8 8h3M12 6h2M6 12h2M9 11h2M8 5h1M13 10h1" stroke="#999" /></svg>
                  <span>背景</span>
                  <svg class="i14"><use href="#lock-line" /></svg>
                </div>
              </div>
            </div>
            <div class="layer-footer">
              <button aria-label="链接图层" class="off"><svg class="i14"><use href="#chain-h" /></svg></button>
              <button aria-label="图层样式" class="off fx">fx</button>
              <button aria-label="添加蒙版"><svg class="i12"><use href="#add-mask" /></svg></button>
              <button aria-label="调整图层" class="has-more"><svg class="i14"><use href="#adjust" /></svg><svg class="corner"><use href="#corner" /></svg></button>
              <button aria-label="新建组"><svg class="i14"><use href="#group" /></svg></button>
              <button aria-label="新建图层"><svg class="i12"><use href="#new-layer" /></svg></button>
              <button aria-label="删除图层" class="off"><svg class="i12"><use href="#trash" /></svg></button>
            </div>
          </section>
        </aside>
      </div>
    </div>
    <script src="script.js"></script>
  </body>
</html>
```

FILE: script.js
```js
// the file name opens selected, ready to be typed over
var filename = document.getElementById("filename");
filename.focus();
filename.select();
```

FILE: styles.css
```css
* {
  box-sizing: border-box;
}

body {
  margin: 0;
  font-family: "Noto Sans CJK SC", sans-serif;
  font-size: 11px;
  line-height: 16px;
  color: #dcdcdc;
  background: #535353;
}

button,
input,
select {
  font: inherit;
  color: inherit;
  margin: 0;
  padding: 0;
  border: 0;
  background: none;
  outline: none;
  border-radius: 0;
}

button {
  display: flex;
  align-items: center;
  justify-content: center;
}

select {
  appearance: none;
}

a {
  color: inherit;
  text-decoration: none;
}

svg {
  display: block;
  flex: none;
}

ul {
  list-style: none;
  margin: 0;
  padding: 0;
}

.sprite {
  position: absolute;
  width: 0;
  height: 0;
}

.i8 { width: 8px; height: 8px; }
.i10 { width: 10px; height: 10px; }
.i12 { width: 12px; height: 12px; }
.i14 { width: 14px; height: 14px; }
.i16 { width: 16px; height: 16px; }

.logo {
  width: 13px;
  height: 13px;
  border-radius: 3px;
  background: #001e36;
  color: #31a8ff;
  font: bold 8px/12px "Open Sans", sans-serif;
  text-align: center;
}

.app {
  display: flex;
  flex-direction: column;
  height: 100vh;
  overflow: hidden;
}

/* menu bar */
.menubar {
  display: flex;
  align-items: center;
  height: 22px;
  padding-left: 6px;
  border-bottom: 1px solid #3c3c3c;
  flex: none;
}

.menus {
  display: flex;
  gap: 9px;
  margin-left: 12px;
  color: #e8e8e8;
}

.window-buttons {
  display: flex;
  align-self: flex-start;
  margin: 0 3px 0 auto;
  border: 1px solid #626262;
  border-top: 0;
  border-radius: 0 0 3px 3px;
  color: #b9b9b9;
}

.window-buttons button {
  width: 24px;
  height: 16px;
}

.window-buttons button + button {
  border-left: 1px solid #626262;
}

.window-buttons .wide {
  width: 41px;
}

/* options bar */
.options {
  display: flex;
  align-items: center;
  height: 32px;
  padding-left: 6px;
  border-top: 1px solid #5c5c5c;
  border-bottom: 2px solid #3f3f3f;
  flex: none;
}

.opt {
  display: flex;
  align-items: center;
  height: 22px;
  border-left: 1px solid #3c3c3c;
}

.opt-home {
  width: 42px;
  padding-left: 10px;
  border-left: 1px dotted #3c3c3c;
}

.opt-brush {
  width: 43px;
  padding-left: 7px;
  gap: 7px;
}

.opt-size {
  width: 78px;
  padding-left: 12px;
  gap: 8px;
}

.opt-size .i8 {
  margin-right: 3px;
}

.brush-size {
  flex-direction: column;
  width: 14px;
  padding-top: 6px;
  font-size: 10px;
  line-height: 12px;
  gap: 4px;
}

.dot {
  width: 8px;
  height: 8px;
  border-radius: 4px;
  background: radial-gradient(#ddd, #8a8a8a 60%, #535353);
}

.opt-mode {
  width: 306px;
  padding-left: 7px;
}

.opt label {
  color: #bcbcbc;
  margin-right: 4px;
}

.opt-flow {
  width: 120px;
  padding-left: 7px;
}

.opt-smooth {
  width: 117px;
  padding-left: 7px;
}

.opt-flow button,
.opt-smooth button,
.opt-mode button {
  margin: 0 auto;
}

.opt-angle {
  width: 63px;
  padding-left: 3px;
}

.opt-angle label {
  margin-right: 3px;
}

.opt-angle input {
  width: 36px;
  height: 18px;
  padding-left: 2px;
  border: 1px solid #646464;
  background: #464646;
  font-size: 10px;
}

.opt-last {
  padding-left: 8px;
  gap: 13px;
}

.opt-right {
  display: flex;
  align-items: center;
  gap: 11px;
  margin: 0 3px 0 auto;
}

.opt-right .i8,
.opt .i8 {
  color: #aaa;
}

.opt .i16,
.opt-right .i16,
.opt-right .i14 {
  color: #d0d0d0;
}

/* dark drop-downs, the arrow shares the cell of the select */
.pick {
  display: grid;
  align-items: center;
  height: 18px;
  background: #444;
  border: 1px solid #4e4e4e;
  border-radius: 2px;
}

.pick select,
.pick svg {
  grid-area: 1 / 1;
}

.pick select {
  height: 16px;
  padding-left: 6px;
}

.pick svg {
  justify-self: end;
  margin-right: 2px;
  color: #aaa;
  pointer-events: none;
}

.blend {
  width: 121px;
  margin-right: 12px;
}

.percent {
  display: flex;
  align-items: center;
  height: 16px;
  background: #464646;
  border: 1px solid #5e5e5e;
}

.percent input {
  width: 34px;
  height: 14px;
  padding-left: 2px;
  font-size: 10px;
  border-right: 1px solid #5e5e5e;
}

.percent svg {
  margin: 0 2px;
  color: #aaa;
}

/* workspace */
.workspace {
  display: flex;
  flex: 1;
  min-height: 0;
}

.strip {
  height: 11px;
  display: flex;
  align-items: center;
  padding: 0 4px;
  background: #424242;
  color: #ccc;
  flex: none;
}

.grip {
  width: 16px;
  height: 4px;
  margin: 3px auto;
  background: repeating-linear-gradient(90deg, #434343 0 1px, #585858 1px 2px);
}

.toolbar {
  width: 36px;
  border-right: 2px solid #3e3e3e;
  border-left: 1px solid #444;
  flex: none;
}

.toolbar .grip {
  margin-bottom: 8px;
}

.tools button {
  position: relative;
  width: 27px;
  height: 23px;
  margin-left: 3px;
}

.corner {
  width: 3px;
  height: 3px;
}

.tools .corner {
  position: absolute;
  right: 1px;
  bottom: 2px;
}

.tools .active {
  background: #383838;
}

.color-switch {
  display: flex;
  gap: 5px;
  padding: 7px 0 5px 4px;
}

.swatches {
  display: grid;
  grid-template-columns: 8px 8px 10px;
  grid-template-rows: 8px 8px 10px;
  width: 26px;
}

.toolbar .swatches {
  margin: 0 0 3px 4px;
}

.fg {
  grid-area: 1 / 1 / 3 / 3;
  background: #000;
  border: 1px solid #fff;
  outline: 1px solid #333;
  z-index: 1;
}

.bg {
  grid-area: 2 / 2 / 4 / 4;
  background: #fff;
  border: 1px solid #333;
}

/* document */
.document {
  display: flex;
  flex-direction: column;
  flex: 1;
  min-width: 0;
}

.doc-tabs {
  display: flex;
  height: 27px;
  background: #424242;
  border-bottom: 1px solid #383838;
  flex: none;
}

.doc-tab {
  display: flex;
  align-items: center;
  gap: 4px;
  padding: 0 7px 2px 8px;
  background: #535353;
  border-right: 1px solid #383838;
}

.canvas-row {
  display: flex;
  flex: 1;
  min-height: 0;
}

.canvas {
  display: flex;
  flex: 1;
  padding: 78px 96px 78px 95px;
  background: #282828;
}

.artboard {
  position: relative;
  flex: 1;
  background: #fff;
  box-shadow: 0 2px 3px #111;
}

.doc-vscroll {
  display: flex;
  flex-direction: column;
  align-items: center;
  width: 14px;
  padding: 4px 0;
  background: #4a4a4a;
  color: #888;
}

.doc-vscroll i {
  width: 11px;
  height: 38%;
  margin: auto 0;
  background: #686868;
  border-radius: 1px;
}

.status {
  display: flex;
  align-items: center;
  height: 14px;
  padding-left: 4px;
  border-top: 1px solid #3c3c3c;
  background: #4a4a4a;
  flex: none;
  font-size: 10px;
  line-height: 13px;
}

.zoom-level {
  width: 39px;
}

.doc-info {
  display: flex;
  align-items: center;
  gap: 5px;
  padding: 0 5px;
  background: #535353;
}

.doc-hscroll {
  display: flex;
  align-items: center;
  flex: 1;
  padding: 0 20px 0 5px;
  color: #888;
}

.doc-hscroll i {
  width: 37%;
  height: 11px;
  margin: 0 auto;
  background: #686868;
}

/* dialog */
.dialog {
  position: absolute;
  left: 50px;
  top: 24px;
  width: 628px;
  color: #1b1b1b;
  font-family: "Open Sans", "Noto Sans CJK SC", sans-serif;
  background: #fff;
  border: 1px solid #a4a4a4;
  border-radius: 7px;
  box-shadow: 0 18px 32px rgba(0, 0, 0, 0.4), 0 0 4px rgba(0, 0, 0, 0.2);
}

.dialog-title {
  display: flex;
  align-items: center;
  gap: 4px;
  height: 24px;
  padding: 0 8px 0 6px;
  margin-bottom: 7px;
}

.dialog-title button {
  margin-left: auto;
}

.dialog-nav {
  display: flex;
  height: 31px;
  margin-bottom: 7px;
  padding-right: 7px;
}

.nav-arrows {
  display: flex;
  align-items: center;
  gap: 18px;
  width: 122px;
  padding-left: 13px;
  color: #8b8b8b;
}

.nav-arrows .dark {
  color: #555;
}

.address,
.search {
  display: flex;
  align-items: center;
  border: 1px solid #e3e3e3;
}

.address {
  flex: 1;
  gap: 5px;
  padding: 0 9px 0 7px;
  margin-right: 7px;
}

.address svg {
  color: #555;
}

.address-end {
  display: flex;
  gap: 20px;
  margin-left: auto;
}

.search {
  width: 180px;
  gap: 11px;
  padding-left: 12px;
  color: #777;
}

.search input {
  width: 120px;
}

.search input::placeholder {
  color: #6d6d6d;
}

.dialog-tools {
  display: flex;
  align-items: center;
  height: 28px;
  gap: 24px;
  padding: 0 13px 0 16px;
  background: #f5f6f8;
  border-bottom: 1px solid #ebecee;
  color: #2b4a70;
}

.dialog-tools button {
  gap: 4px;
}

.caret {
  border: 3px solid transparent;
  border-top-color: currentColor;
  border-bottom: 0;
}

.view {
  display: flex;
  align-items: center;
  gap: 9px;
  margin-left: auto;
}

.view-lines {
  width: 12px;
  height: 12px;
}

.dialog-tools .help {
  width: 14px;
  height: 14px;
  margin-left: 16px;
  border-radius: 7px;
  background: #0f80d7;
  color: #fff;
  font-weight: bold;
}

.browser {
  display: flex;
  height: 211px;
}

.tree {
  display: grid;
  grid-auto-rows: 1fr;
  align-items: center;
  width: 123px;
  padding: 2px 0 9px 1px;
}

.tree a {
  display: flex;
  align-items: center;
  gap: 3px;
  height: 25px;
  padding-left: 14px;
}

.tree a .i10 {
  margin-right: 5px;
  color: #777;
}

.tree .selected {
  background: #d9d9d9;
}

.tree-scroll {
  width: 15px;
  padding: 129px 4px 0;
  background: #f0f0f0;
}

.tree-scroll i {
  display: block;
  height: 60px;
  background: #868686;
}

.files {
  flex: 1;
  padding-left: 4px;
}

table {
  width: 100%;
  border-collapse: collapse;
  table-layout: fixed;
}

tr {
  height: 28px;
}

th,
td {
  padding: 0 0 0 6px;
  text-align: left;
  font-weight: normal;
  color: #6d6d6d;
}

th {
  color: #4c607a;
  padding-bottom: 3px;
  background: linear-gradient(#ececec, #ececec) left top / 1px 24px no-repeat;
}

.col-name {
  width: 271px;
  padding-left: 26px;
  background: none;
  position: relative;
}

.col-date {
  width: 144px;
}

.sort {
  position: absolute;
  left: 142px;
  top: 0;
}

td:first-child {
  padding-left: 16px;
  color: #1b1b1b;
}

td svg {
  display: inline-block;
  width: 14px;
  height: 12px;
  margin-right: 3px;
  vertical-align: -2px;
}

.files-hscroll {
  height: 15px;
  margin-left: -1px;
  padding: 4px 125px 4px 16px;
  background: #f0f0f0;
}

.files-hscroll i {
  display: block;
  height: 7px;
  background: #868686;
}

.files-vscroll {
  width: 14px;
  height: 196px;
  padding: 16px 4px 0 3px;
  background: #f0f0f0;
}

.files-vscroll i {
  display: block;
  height: 43px;
  background: #868686;
}

.save-form {
  height: 135px;
  padding: 10px 5px 0 0;
  background: #f9f9f9;
}

.fields {
  display: grid;
  grid-template-columns: 106px 1fr;
  column-gap: 4px;
  row-gap: 1px;
  text-align: right;
  line-height: 20px;
}

.combo {
  display: grid;
  align-items: center;
  height: 20px;
  border: 1px solid #6aace4;
  background: #fff;
}

.tinted {
  background: #e5f1fb;
}

.combo input,
.combo select,
.combo svg {
  grid-area: 1 / 1;
}

.combo input,
.combo select {
  width: 100%;
  height: 16px;
  padding-left: 2px;
  line-height: 14px;
}

.combo svg {
  justify-self: end;
  margin-right: 3px;
  color: #666;
  pointer-events: none;
}

#filename::selection {
  background: #0a78d7;
  color: #fff;
}

.save-options {
  display: flex;
  padding: 11px 0 0 105px;
}

.option-left {
  width: 222px;
}

.option-title {
  width: 143px;
  height: 14px;
  margin-left: 6px;
  line-height: 14px;
  background: #f0f0f0;
}

.option-line {
  display: flex;
  align-items: flex-start;
  gap: 3px;
  margin-top: 4px;
  line-height: 14px;
  color: #1668c7;
}

.muted {
  color: #777;
}

input[type="checkbox"] {
  appearance: none;
  width: 12px;
  height: 12px;
  margin: 2px 0 0;
  border-radius: 2px;
  background: #0a5cb8;
  display: grid;
  place-items: center;
}

input[type="checkbox"]::after {
  content: "";
  width: 6px;
  height: 3px;
  margin-top: -2px;
  border: solid #fff;
  border-width: 0 0 1px 1px;
  rotate: -45deg;
}

input[type="checkbox"]:disabled {
  background: #c2c2c2;
}

.option-right {
  display: grid;
  grid-template-columns: 25px 120px;
  column-gap: 4px;
  row-gap: 5px;
  line-height: 14px;
}

.thumb-line {
  display: flex;
  gap: 2px;
  color: #777;
}

.option-right button,
.dialog-footer button {
  height: 22px;
  background: #fdfdfd;
  border: 1px solid #d5d5d5;
  border-radius: 2px;
}

.option-right button {
  grid-column: 2;
}

.dialog-footer {
  display: flex;
  align-items: flex-start;
  gap: 11px;
  height: 53px;
  padding: 19px 0 0;
  background: #f0f0f0;
  border-radius: 0 0 7px 7px;
}

.dialog-footer button {
  width: 78px;
}

.dialog-footer .hide-folders {
  width: auto;
  gap: 5px;
  margin: 2px auto 0 8px;
  background: none;
  border: 0;
}

.dialog-footer .primary {
  border-color: #3d95dd;
}

.resize {
  width: 8px;
  height: 8px;
  align-self: flex-end;
  margin: 0 1px 1px -4px;
}

/* lies over the form, pointing at the file type */
.marker {
  position: absolute;
  left: 106px;
  top: 278px;
  width: 200px;
  height: 90px;
  pointer-events: none;
}

/* dock */
.dock {
  width: 37px;
  border-left: 3px solid #3e3e3e;
  flex: none;
}

.dock .strip {
  justify-content: flex-end;
}

.dock-icons {
  padding-bottom: 4px;
  border-bottom: 1px solid #3c3c3c;
}

.dock .grip {
  margin: 3px auto 0;
}

.dock-icons button {
  width: 34px;
  height: 25px;
}

/* panels */
.panels {
  display: flex;
  flex-direction: column;
  width: 255px;
  border-left: 2px solid #3e3e3e;
  border-right: 1px solid #3e3e3e;
  flex: none;
}

.panels .strip {
  justify-content: flex-end;
}

.tabs {
  display: flex;
  align-items: center;
  height: 25px;
  padding-right: 5px;
  background: #424242;
  border-bottom: 1px solid #3a3a3a;
  font-size: 10px;
}

.tabs button {
  height: 25px;
  padding: 0 7px 4px;
  color: #a8a8a8;
  border-right: 1px solid #393939;
}

.tabs .on {
  color: #f0f0f0;
  background: #535353;
}

.panel-menu {
  width: 10px;
  height: 8px;
  margin: 0 0 0 auto;
  color: #bbb;
}

.color-panel {
  height: 190px;
  border-bottom: 3px solid #3e3e3e;
}

.color-body {
  display: flex;
  height: 145px;
  padding: 6px 14px 0 9px;
}

.color-body .swatches {
  margin-top: 4px;
}

.color-field {
  flex: 1;
  margin: 0 14px 0 4px;
  display: flex;
  align-items: flex-end;
  overflow: hidden;
  background: linear-gradient(transparent, #000), linear-gradient(90deg, #fff, #f00);
}

.color-field i {
  width: 10px;
  height: 10px;
  margin: 0 0 -4px -4px;
  border: 1px solid #ccc;
  border-radius: 5px;
}

.hue {
  width: 18px;
  background: linear-gradient(#f00, #f0f, #00f, #0ff, #0f0, #ff0, #f00);
  position: relative;
}

.hue::before {
  content: "";
  position: absolute;
  left: -7px;
  bottom: -2px;
  border: 3px solid transparent;
  border-left: 5px solid #eee;
  border-right: 0;
}

.properties {
  display: flex;
  flex-direction: column;
  height: 278px;
  border-bottom: 2px solid #3e3e3e;
}

.doc-row {
  display: flex;
  align-items: center;
  gap: 7px;
  height: 31px;
  padding-left: 10px;
  border-bottom: 1px solid #3c3c3c;
}

.doc-icon {
  padding: 1px;
  background: #3b3b3b;
}

.prop-body {
  display: flex;
  height: 198px;
}

.prop-main {
  flex: 1;
  min-width: 0;
}

.prop-title {
  display: flex;
  align-items: center;
  gap: 5px;
  padding: 3px 0 0 4px;
  font-weight: bold;
  color: #f0f0f0;
}

.prop-title svg {
  color: #aaa;
}

.size-grid {
  display: grid;
  grid-template-columns: 16px 21px 50px 13px 50px;
  column-gap: 6px;
  row-gap: 6px;
  align-items: center;
  padding: 11px 0 0 12px;
  text-align: right;
  font-size: 10px;
}

.link {
  grid-row: 1 / 3;
}

.size-grid input {
  width: 50px;
  height: 19px;
  padding-left: 2px;
  background: #464646;
  border: 1px solid #626262;
}

.size-grid input:disabled {
  background: #505050;
  color: #6c6c6c;
}

.orient {
  display: flex;
  gap: 3px;
  padding: 12px 0 8px 59px;
}

.orient button {
  width: 21px;
  height: 20px;
}

.orient .on {
  background: #383838;
}

.resolution {
  padding-left: 60px;
  color: #c8c8c8;
}

.mode-grid {
  display: grid;
  grid-template-columns: 22px 123px;
  column-gap: 8px;
  row-gap: 5px;
  padding: 7px 0 0 33px;
  line-height: 16px;
}

.mode-grid span + span,
.fill-swatch {
  grid-column: 2;
}

.fill-swatch {
  width: 15px;
  height: 10px;
  margin-top: 4px;
  background: #fff;
}

.prop-scroll {
  display: flex;
  flex-direction: column;
  align-items: center;
  width: 14px;
  padding: 4px 0;
  background: #4a4a4a;
  color: #999;
}

.prop-scroll i {
  width: 10px;
  height: 78px;
  margin: 3px 0 auto;
  background: #686868;
}

.layers {
  display: flex;
  flex-direction: column;
  flex: 1;
}

.layer-row {
  display: flex;
  align-items: center;
  height: 26px;
  padding-left: 3px;
  color: #868686;
  border-bottom: 1px solid #404040;
}

.layer-row.filter {
  height: 29px;
  padding-top: 4px;
}

.layer-row.locks {
  height: 28px;
  padding: 0 0 2px 5px;
  border-bottom: 0;
}

.layer-row .pick {
  width: 76px;
  background: #505050;
  border-color: #484848;
}

.layer-row .pick svg,
.layer-row .percent svg {
  color: #777;
}

.layer-row .pick .lens {
  justify-self: start;
  margin-left: 6px;
  color: #aaa;
}

.layer-row .with-icon select {
  padding-left: 18px;
}

.filter-icons {
  display: flex;
  align-items: center;
  gap: 8px;
  margin-left: 13px;
  color: #a8a8a8;
}

.toggle {
  width: 8px;
  height: 16px;
  margin-left: 5px;
  border-radius: 4px;
  background: radial-gradient(circle at 4px 4px, #a0a0a0 4px, #484848 4px);
}

.layer-row .layer-mode {
  width: 104px;
  margin-right: 7px;
}

.layer-row label {
  margin-right: 3px;
}

.layer-row .percent {
  background: #4d4d4d;
}

.lock-icons {
  display: flex;
  align-items: center;
  gap: 7px;
  margin: 0 6px 0 7px;
  color: #a8a8a8;
}

.layer-list {
  flex: 1;
  background: #4d4d4d;
  border-top: 1px solid #404040;
}

.layer {
  display: flex;
  height: 29px;
  margin-right: 14px;
}

.visibility {
  width: 26px;
  background: #535353;
}

.layer-name {
  display: flex;
  align-items: center;
  flex: 1;
  padding: 0 12px 0 4px;
  background: #6a6a6a;
  color: #f0f0f0;
}

.layer-name span {
  margin: 0 auto 0 9px;
}

.layer-thumb {
  width: 28px;
  height: 22px;
  background: #fff;
  border: 1px solid #333;
}

.layer-footer {
  display: flex;
  align-items: center;
  justify-content: flex-end;
  gap: 4px;
  height: 23px;
  padding-right: 20px;
  border-top: 2px solid #3e3e3e;
}

.layer-footer button {
  width: 20px;
  height: 16px;
}

.layer-footer .off {
  color: #8c8c8c;
}

.layer-footer .fx {
  font-family: "Liberation Serif", serif;
  font-style: italic;
  font-size: 13px;
}

.has-more .corner {
  align-self: flex-end;
}
```
